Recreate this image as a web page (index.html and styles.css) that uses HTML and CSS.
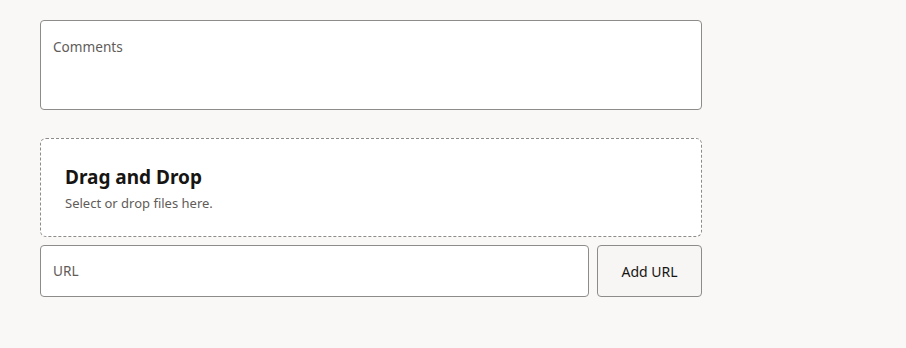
FILE: index.html
```html
<!DOCTYPE html>
<html>
<head>
<meta charset="utf-8">
<link rel="stylesheet" href="styles.css">
</head>
<body>
<div class="form">
  <div class="textarea">
    <span class="placeholder">Comments</span>
  </div>
  <div class="dropzone">
    <div class="dz-title">Drag and Drop</div>
    <div class="dz-sub">Select or drop files here.</div>
  </div>
  <div class="url-row">
    <div class="url-input"><span class="placeholder">URL</span></div>
    <button class="add-btn">Add URL</button>
  </div>
</div>
</body>
</html>
```
FILE: styles.css
```css
html, body {
  margin: 0;
  background: #f9f8f6;
  font-family: "Noto Sans", "Liberation Sans", sans-serif;
}
body {
  padding: 20px 40px;
}
.form {
  width: 662px;
  display: flex;
  flex-direction: column;
}
.textarea {
  box-sizing: border-box;
  height: 90px;
  background: #fff;
  border: 1px solid #8e8c8a;
  border-radius: 4px;
  padding: 14px 12px;
}
.placeholder {
  font-size: 13.6px;
  color: #5f5c59;
  line-height: 18px;
}
.dropzone {
  box-sizing: border-box;
  margin-top: 28px;
  height: 99px;
  background: #fff;
  border: 1px dashed #8e8c8a;
  border-radius: 6px;
  padding: 25px 24px;
}
.dz-title {
  font-size: 19px;
  font-weight: 700;
  color: #161513;
  line-height: 26px;
}
.dz-sub {
  font-size: 13px;
  color: #5f5c59;
  line-height: 16px;
  margin-top: 5px;
}
.url-row {
  display: flex;
  gap: 8px;
  margin-top: 8px;
}
.url-input {
  box-sizing: border-box;
  flex: 1;
  height: 52px;
  background: #fff;
  border: 1px solid #8e8c8a;
  border-radius: 4px;
  padding: 0 12px;
  display: flex;
  align-items: center;
}
.add-btn {
  box-sizing: border-box;
  width: 105px;
  height: 52px;
  background: #f7f6f4;
  border: 1px solid #8e8c8a;
  border-radius: 4px;
  font-family: inherit;
  font-size: 14px;
  color: #161513;
  padding: 0;
}
```
